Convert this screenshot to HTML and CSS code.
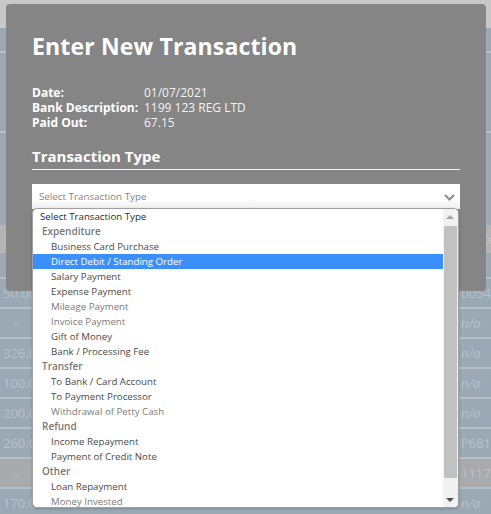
FILE: index.html
```html
<!DOCTYPE html>
<html>
<head>
<meta charset="utf-8">
<link rel="stylesheet" href="styles.css">
</head>
<body>
<div class="bg">
  <div class="bg-top"></div>
  <div class="bg-band b1"></div>
  <div class="bg-band b2"></div>
  <div class="bg-band b3"></div>
  <div class="bg-head"><span>P</span><span class="ref"><i></i>Re</span></div>
  <div class="bg-spacer"></div>
  <div class="bg-row"><span class="l">50.00</span><span class="r">00054</span></div>
  <div class="bg-row"><span class="l">&nbsp;&nbsp;&nbsp;-</span><span class="r it">n/a</span></div>
  <div class="bg-row"><span class="l">326.00</span><span class="r it">n/a</span></div>
  <div class="bg-row"><span class="l">100.00</span><span class="r it">n/a</span></div>
  <div class="bg-row"><span class="l">200.00</span><span class="r it">n/a</span></div>
  <div class="bg-row"><span class="l">260.00</span><span class="r">P681</span></div>
  <div class="bg-row grey"><span class="l">&nbsp;&nbsp;&nbsp;-</span><span class="r">1117</span></div>
  <div class="bg-row"><span class="l">170.00</span><span class="r it">n/a</span></div>
</div>

<div class="modal">
  <h1 class="title">Enter New Transaction</h1>
  <div class="info">
    <div class="lbl">Date:</div><div class="val">01/07/2021</div>
    <div class="lbl">Bank Description:</div><div class="val">1199 123 REG LTD</div>
    <div class="lbl">Paid Out:</div><div class="val">67.15</div>
  </div>
  <h2 class="section">Transaction Type</h2>
  <div class="select">
    <span>Select Transaction Type</span>
    <svg class="chev" width="11" height="7" viewBox="0 0 11 7"><path d="M1 1 L5.5 5.5 L10 1" fill="none" stroke="#8a8a8a" stroke-width="2"/></svg>
  </div>
</div>

<div class="dropdown">
  <div class="list">
    <div class="opt first">Select Transaction Type</div>
    <div class="grp">Expenditure</div>
    <div class="opt">Business Card Purchase</div>
    <div class="opt sel">Direct Debit / Standing Order</div>
    <div class="opt">Salary Payment</div>
    <div class="opt">Expense Payment</div>
    <div class="opt lt">Mileage Payment</div>
    <div class="opt lt">Invoice Payment</div>
    <div class="opt">Gift of Money</div>
    <div class="opt">Bank / Processing Fee</div>
    <div class="grp">Transfer</div>
    <div class="opt">To Bank / Card Account</div>
    <div class="opt">To Payment Processor</div>
    <div class="opt lt">Withdrawal of Petty Cash</div>
    <div class="grp">Refund</div>
    <div class="opt">Income Repayment</div>
    <div class="opt">Payment of Credit Note</div>
    <div class="grp">Other</div>
    <div class="opt">Loan Repayment</div>
    <div class="opt lt">Money Invested</div>
  </div>
  <div class="scroll">
    <div class="arrow up"></div>
    <div class="thumb"></div>
    <div class="track"></div>
    <div class="arrow down"></div>
  </div>
</div>
</body>
</html>
```
FILE: styles.css
```css
html, body {
  margin: 0;
  padding: 0;
}
body {
  width: 491px;
  height: 514px;
  overflow: hidden;
  position: relative;
  font-family: "Open Sans", "Noto Sans", sans-serif;
  background: #9ba9b5;
}
.bg {
  display: flex;
  flex-direction: column;
}
.bg-top {
  height: 28px;
  background: #c8c8c8;
}
.bg-band {
  border-bottom: 2px solid #b6bfc7;
}
.b1 { height: 23px; }
.b2 { height: 78px; }
.b3 { height: 92px; border-bottom: none; }
.bg-head {
  height: 28px;
  background: #b3b4b5;
  display: flex;
  justify-content: space-between;
  align-items: center;
  font-size: 13px;
  color: #c5c5c5;
  padding: 0 0 0 4px;
}
.bg-head .ref {
  display: flex;
  align-items: center;
  gap: 4px;
  margin-right: -4px;
}
.bg-head .ref i {
  width: 2px;
  height: 12px;
  background: #c9918d;
}
.bg-spacer {
  height: 24px;
}
.bg-row {
  height: 28px;
  border-top: 2px solid #b6bfc7;
  display: flex;
  justify-content: space-between;
  align-items: center;
  font-size: 13px;
  color: #b7c1ca;
}
.bg-row.grey { background: #a9aaab; }
.bg-row .l {
  width: 40px;
  padding-left: 3px;
  white-space: nowrap;
  overflow: hidden;
}
.bg-row .r {
  width: 30px;
  overflow: hidden;
  white-space: nowrap;
  text-align: left;
  direction: rtl;
}
.bg-row .it { font-style: italic; direction: ltr; padding-left: 2px; }

.modal {
  position: absolute;
  left: 6px;
  top: 4px;
  width: 480px;
  height: 287px;
  box-sizing: border-box;
  background: #858585;
  border-radius: 4px;
  padding: 27px 26px 0 26px;
  color: #fff;
}
.title {
  margin: 0;
  font-size: 23px;
  font-weight: 700;
  line-height: 30px;
  letter-spacing: 0.15px;
}
.info {
  margin-top: 24px;
  display: grid;
  grid-template-columns: 112px auto;
  font-size: 12px;
  line-height: 15px;
}
.lbl { font-weight: 700; }
.val { color: #f3f3f3; }
.section {
  margin: 15px 0 0 0;
  font-size: 15px;
  font-weight: 700;
  line-height: 22px;
  padding-bottom: 2px;
  border-bottom: 1px solid #f2f2f2;
}
.select {
  margin-top: 14px;
  height: 25px;
  background: linear-gradient(#ffffff 55%, #efefef);
  display: flex;
  align-items: center;
  justify-content: space-between;
  padding: 0 5px 0 7px;
  font-size: 9.8px;
  color: #858585;
}
.chev { margin-top: 1px; }

.dropdown {
  position: absolute;
  left: 32px;
  top: 208px;
  width: 427px;
  height: 300px;
  box-sizing: border-box;
  background: #fff;
  border: 1px solid #a0a0a0;
  border-radius: 5px;
  box-shadow: 0 1px 3px rgba(0,0,0,0.2);
  display: flex;
  overflow: hidden;
}
.list {
  flex: 1;
  padding-top: 0;
  font-size: 9.7px;
  line-height: 15px;
}
.opt {
  padding-left: 18px;
  color: #4a4a4a;
  white-space: nowrap;
}
.opt.first {
  padding-left: 7px;
  color: #2a2a2a;
}
.opt.lt { color: #7a7a7a; }
.opt.sel {
  background: #3b8ffa;
  color: #fff;
}
.grp {
  padding-left: 9px;
  color: #777;
  font-weight: 600;
  font-size: 10px;
}
.scroll {
  width: 15px;
  background: #f1f1f1;
  display: flex;
  flex-direction: column;
  align-items: center;
}
.thumb {
  width: 13px;
  height: 252px;
  background: #c1c1c1;
}
.track { flex: 1; }
.arrow {
  height: 17px;
  width: 15px;
  position: relative;
}
.arrow::after {
  content: "";
  position: absolute;
  left: 3px;
  border-left: 4px solid transparent;
  border-right: 4px solid transparent;
}
.arrow.up::after {
  top: 6px;
  border-bottom: 4px solid #a3a3a3;
}
.arrow.down {
  height: 13px;
}
.arrow.down::after {
  top: 4px;
  border-top: 4px solid #505050;
}
```
